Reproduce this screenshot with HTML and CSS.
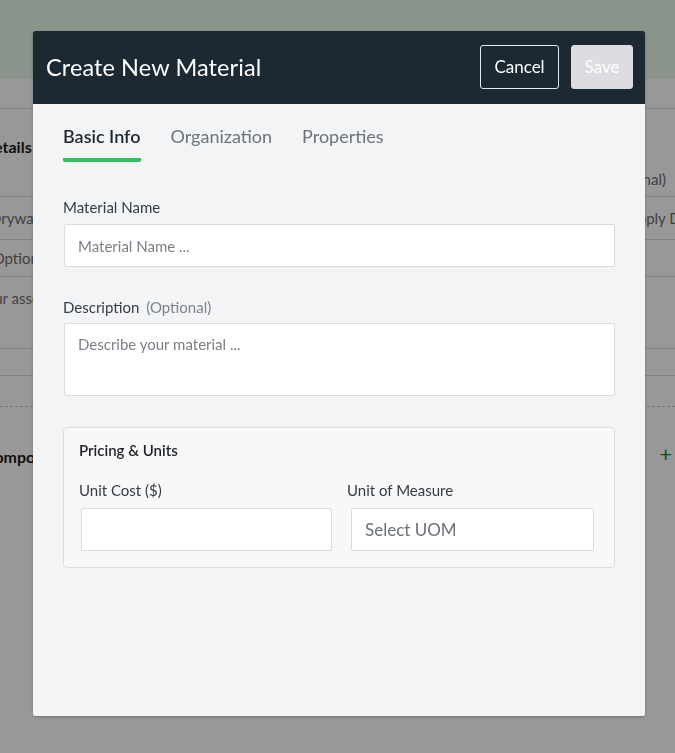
FILE: index.html
```html
<!DOCTYPE html>
<html lang="en">
<head>
<meta charset="utf-8">
<title>Create New Material</title>
<link rel="stylesheet" href="styles.css">
</head>
<body>
<div class="page">
  <div class="page-top"></div>
  <div class="page-nav"></div>
  <div class="row row-details">
    <span class="left bold">Details</span>
    <span class="right muted">(Optional)</span>
  </div>
  <div class="row row-short">
    <span class="left muted">Drywall</span>
    <span class="right muted">Apply Drywall</span>
  </div>
  <div class="row row-opt">
    <span class="left muted">(Optional)</span>
  </div>
  <div class="row row-desc">
    <span class="left muted">Your assembly</span>
  </div>
  <div class="row row-gap1"></div>
  <div class="row row-gap2 dashed"></div>
  <div class="row row-comp">
    <span class="left bold">Components</span>
    <span class="right plus">+</span>
  </div>
</div>
<div class="overlay"></div>

<div class="modal">
  <div class="modal-header">
    <h1 class="modal-title">Create New Material</h1>
    <div class="modal-actions">
      <button class="btn btn-outline">Cancel</button>
      <button class="btn btn-disabled">Save</button>
    </div>
  </div>
  <div class="modal-body">
    <nav class="tabs">
      <span class="tab active">Basic Info</span>
      <span class="tab">Organization</span>
      <span class="tab">Properties</span>
    </nav>
    <div class="field">
      <label class="label">Material Name</label>
      <div class="input"><span class="placeholder">Material Name ...</span></div>
    </div>
    <div class="field field-desc">
      <label class="label">Description <span class="optional">(Optional)</span></label>
      <div class="input textarea"><span class="placeholder">Describe your material ...</span></div>
    </div>
    <section class="panel">
      <h2 class="panel-title">Pricing &amp; Units</h2>
      <div class="panel-grid">
        <div class="col col-cost">
          <label class="label">Unit Cost ($)</label>
          <div class="input"></div>
        </div>
        <div class="col col-uom">
          <label class="label">Unit of Measure</label>
          <div class="input select"><span class="placeholder uom">Select UOM</span></div>
        </div>
      </div>
    </section>
  </div>
</div>
</body>
</html>
```

FILE: styles.css
```css
* { box-sizing: border-box; }
html, body {
  margin: 0;
  padding: 0;
  width: 675px;
  height: 753px;
  overflow: hidden;
  font-family: Lato, "Open Sans", "Liberation Sans", sans-serif;
}
body { background: #ffffff; }

/* background page */
.page { width: 675px; height: 753px; background: #ffffff; overflow: hidden; }
.page-top { height: 79px; background: #e9f8e7; }
.page-nav { height: 30px; border-bottom: 1px solid #d8d8d8; }
.row {
  display: flex;
  justify-content: space-between;
  align-items: center;
  border-bottom: 1px solid #d8d8d8;
  font-size: 15px;
  color: #222;
  white-space: nowrap;
}
.row-details { height: 88px; align-items: flex-start; }
.row-details .left { margin-top: 28px; }
.row-details .right { margin-top: 61px; margin-right: 9px; }
.row-short { height: 43px; }
.row-opt { height: 37px; }
.row-desc { height: 72px; align-items: flex-start; }
.row-desc .left { margin-top: 12px; }
.row-gap1 { height: 27px; }
.row-gap2 { height: 31px; }
.dashed { border-bottom: 1px dashed #c8c8c8; }
.row-comp { height: 100px; border-bottom: none; align-items: flex-start; }
.row-comp .left { margin-top: 40px; }
.row-comp .right { margin-top: 33px; }
.left { margin-left: -18px; }
.row-short .left { margin-left: -10px; }
.row-opt .left { margin-left: -11px; }
.row-desc .left { margin-left: -22px; }
.row-comp .left { margin-left: -16px; }
.right { margin-right: -56px; }
.row-short .right { margin-right: -45px; }
.bold { font-weight: 700; font-size: 16px; color: #1b1b1b; }
.muted { color: #6e6e6e; }
.plus { color: #1d8f1d; font-size: 22px; font-weight: 400; margin-right: 3px; }

.overlay {
  position: fixed;
  inset: 0;
  background: rgba(0, 0, 0, 0.405);
}

/* modal */
.modal {
  position: fixed;
  left: 33px;
  top: 31px;
  width: 612px;
  height: 685px;
  background: #f3f4f6;
  border-radius: 2px;
  overflow: hidden;
  box-shadow: 0 1px 3px rgba(0,0,0,0.25);
}
.modal-header {
  height: 73px;
  background: #1c2832;
  display: flex;
  align-items: center;
  justify-content: space-between;
  padding: 0 12px 2px 13px;
}
.modal-title {
  margin: 0;
  color: #ffffff;
  font-size: 23.5px;
  font-weight: 400;
  letter-spacing: 0.1px;
}
.modal-actions { display: flex; gap: 12px; }
.btn {
  height: 44px;
  border-radius: 3px;
  font-family: inherit;
  font-size: 17px;
  padding: 0;
}
.btn-outline {
  width: 79px;
  background: transparent;
  border: 1px solid #e6e8ea;
  color: #ffffff;
}
.btn-disabled {
  width: 62px;
  background: #dcdde0;
  border: 1px solid #dcdde0;
  color: #ffffff;
}

.modal-body { padding: 21px 30px 0 30px; }
.tabs { display: flex; gap: 30px; }
.tab {
  font-size: 18px;
  line-height: 22px;
  color: #6c737d;
  padding-bottom: 11px;
  border-bottom: 4px solid transparent;
}
.tab.active {
  color: #1c2832;
  font-weight: 600;
  border-bottom-color: #2fbf5b;
  border-radius: 0 0 2px 2px;
}

.field { margin-top: 35px; display: flex; flex-direction: column; }
.field-desc { margin-top: 30px; }
.label {
  font-size: 15px;
  line-height: 20px;
  color: #353c44;
}
.optional { color: #7d838b; margin-left: 3px; }
.input {
  margin-top: 7px;
  margin-left: 1px;
  height: 43px;
  background: #ffffff;
  border: 1px solid #d9dadc;
  border-radius: 2px;
  display: flex;
  align-items: center;
  padding-left: 13px;
}
.field-desc .input { margin-top: 6px; }
.textarea { height: 73px; align-items: flex-start; padding-top: 11px; }
.placeholder { font-size: 15px; color: #7b8088; }

.panel {
  margin-top: 31px;
  background: #f8f8f9;
  border: 1px solid #dbdcde;
  border-radius: 4px;
  padding: 12px 15px 16px 15px;
}
.panel-title {
  margin: 0;
  font-size: 15px;
  line-height: 20px;
  font-weight: 600;
  color: #1f2329;
}
.panel-grid {
  margin-top: 20px;
  display: grid;
  grid-template-columns: 253px 1fr;
  gap: 15px;
}
.col { display: flex; flex-direction: column; }
.col .input { margin-top: 8px; }
.col-cost .input { margin-left: 2px; }
.col-uom .input { margin-left: 4px; margin-right: 5px; }
.uom { font-size: 17px; color: #6b7078; }
```
